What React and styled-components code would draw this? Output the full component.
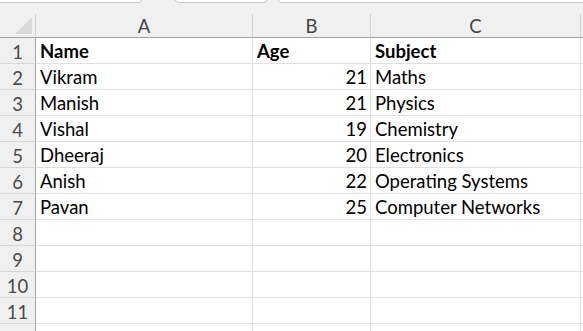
import React from "react";
import styled, { createGlobalStyle } from "styled-components";

const GlobalStyle = createGlobalStyle`
  html, body {
    margin: 0;
    padding: 0;
    background: #ffffff;
    overflow: hidden;
  }
  * {
    box-sizing: border-box;
  }
`;

const COLS = ["36px", "217px", "118px", "210px", "1fr"];

const rows = [
  { name: "Name", age: "Age", subject: "Subject", bold: true },
  { name: "Vikram", age: "21", subject: "Maths" },
  { name: "Manish", age: "21", subject: "Physics" },
  { name: "Vishal", age: "19", subject: "Chemistry" },
  { name: "Dheeraj", age: "20", subject: "Electronics" },
  { name: "Anish", age: "22", subject: "Operating Systems" },
  { name: "Pavan", age: "25", subject: "Computer Networks" },
  {},
  {},
  {},
  {},
  {},
];

const Sheet = styled.div`
  width: 583px;
  height: 331px;
  background: #f0f0f0;
  font-family: Lato, "Liberation Sans", sans-serif;
  overflow: hidden;
`;

const TopStrip = styled.div`
  height: 14px;
  position: relative;
`;

const ToolBox = styled.div`
  position: absolute;
  top: -20px;
  left: ${(p) => p.$left}px;
  width: ${(p) => p.$width}px;
  height: 23px;
  background: #ffffff;
  border: 1px solid #c6c6c6;
  border-radius: 5px;
`;

const Grid = styled.div`
  display: grid;
  grid-template-columns: ${COLS.join(" ")};
  grid-auto-rows: 26px;
  grid-template-rows: 24px;
  background: #ffffff;
`;

const ColHead = styled.div`
  background: #f0f0f0;
  border-right: 1px solid ${(p) => (p.$last ? "transparent" : "#d2d2d2")};
  border-bottom: 1px solid #a3a3a3;
  color: #444444;
  font-size: 18.5px;
  display: flex;
  align-items: center;
  justify-content: center;
  padding-top: 1px;
`;

const Corner = styled.div`
  background: #f0f0f0;
  border-right: 1px solid #d2d2d2;
  border-bottom: 1px solid #a3a3a3;
  position: relative;
  svg {
    position: absolute;
    right: 3px;
    bottom: 3px;
  }
`;

const RowHead = styled.div`
  background: #f0f0f0;
  border-right: 1px solid #a3a3a3;
  border-bottom: 1px solid #d6d6d6;
  color: #4a4a4a;
  font-size: 18.5px;
  display: flex;
  align-items: center;
  justify-content: center;
  padding-top: 2px;
`;

const Cell = styled.div`
  background: #ffffff;
  border-right: 1px solid ${(p) => (p.$last ? "transparent" : "#e0e0e0")};
  border-bottom: 1px solid #e0e0e0;
  color: #000000;
  font-size: 18.5px;
  font-weight: ${(p) => (p.$bold ? 700 : 400)};
  display: flex;
  align-items: flex-end;
  justify-content: ${(p) => (p.$num ? "flex-end" : "flex-start")};
  padding: 0 3px 1px 4px;
  white-space: nowrap;
  overflow: visible;
`;

export default function App() {
  return (
    <>
      <GlobalStyle />
      <Sheet>
        <TopStrip>
          <ToolBox $left={-10} $width={153} />
          <ToolBox $left={174} $width={94} />
          <ToolBox $left={277} $width={320} />
        </TopStrip>
        <Grid>
          <Corner>
            <svg width="17" height="17" viewBox="0 0 17 17">
              <polygon points="17,0 17,17 0,17" fill="#d9d9d9" />
            </svg>
          </Corner>
          <ColHead>A</ColHead>
          <ColHead>B</ColHead>
          <ColHead>C</ColHead>
          <ColHead $last />
          {rows.map((r, i) => (
            <React.Fragment key={i}>
              <RowHead>{i < 11 ? i + 1 : ""}</RowHead>
              <Cell $bold={r.bold}>{r.name}</Cell>
              <Cell $bold={r.bold} $num={!r.bold}>
                {r.age}
              </Cell>
              <Cell $bold={r.bold}>{r.subject}</Cell>
              <Cell $last />
            </React.Fragment>
          ))}
        </Grid>
      </Sheet>
    </>
  );
}
